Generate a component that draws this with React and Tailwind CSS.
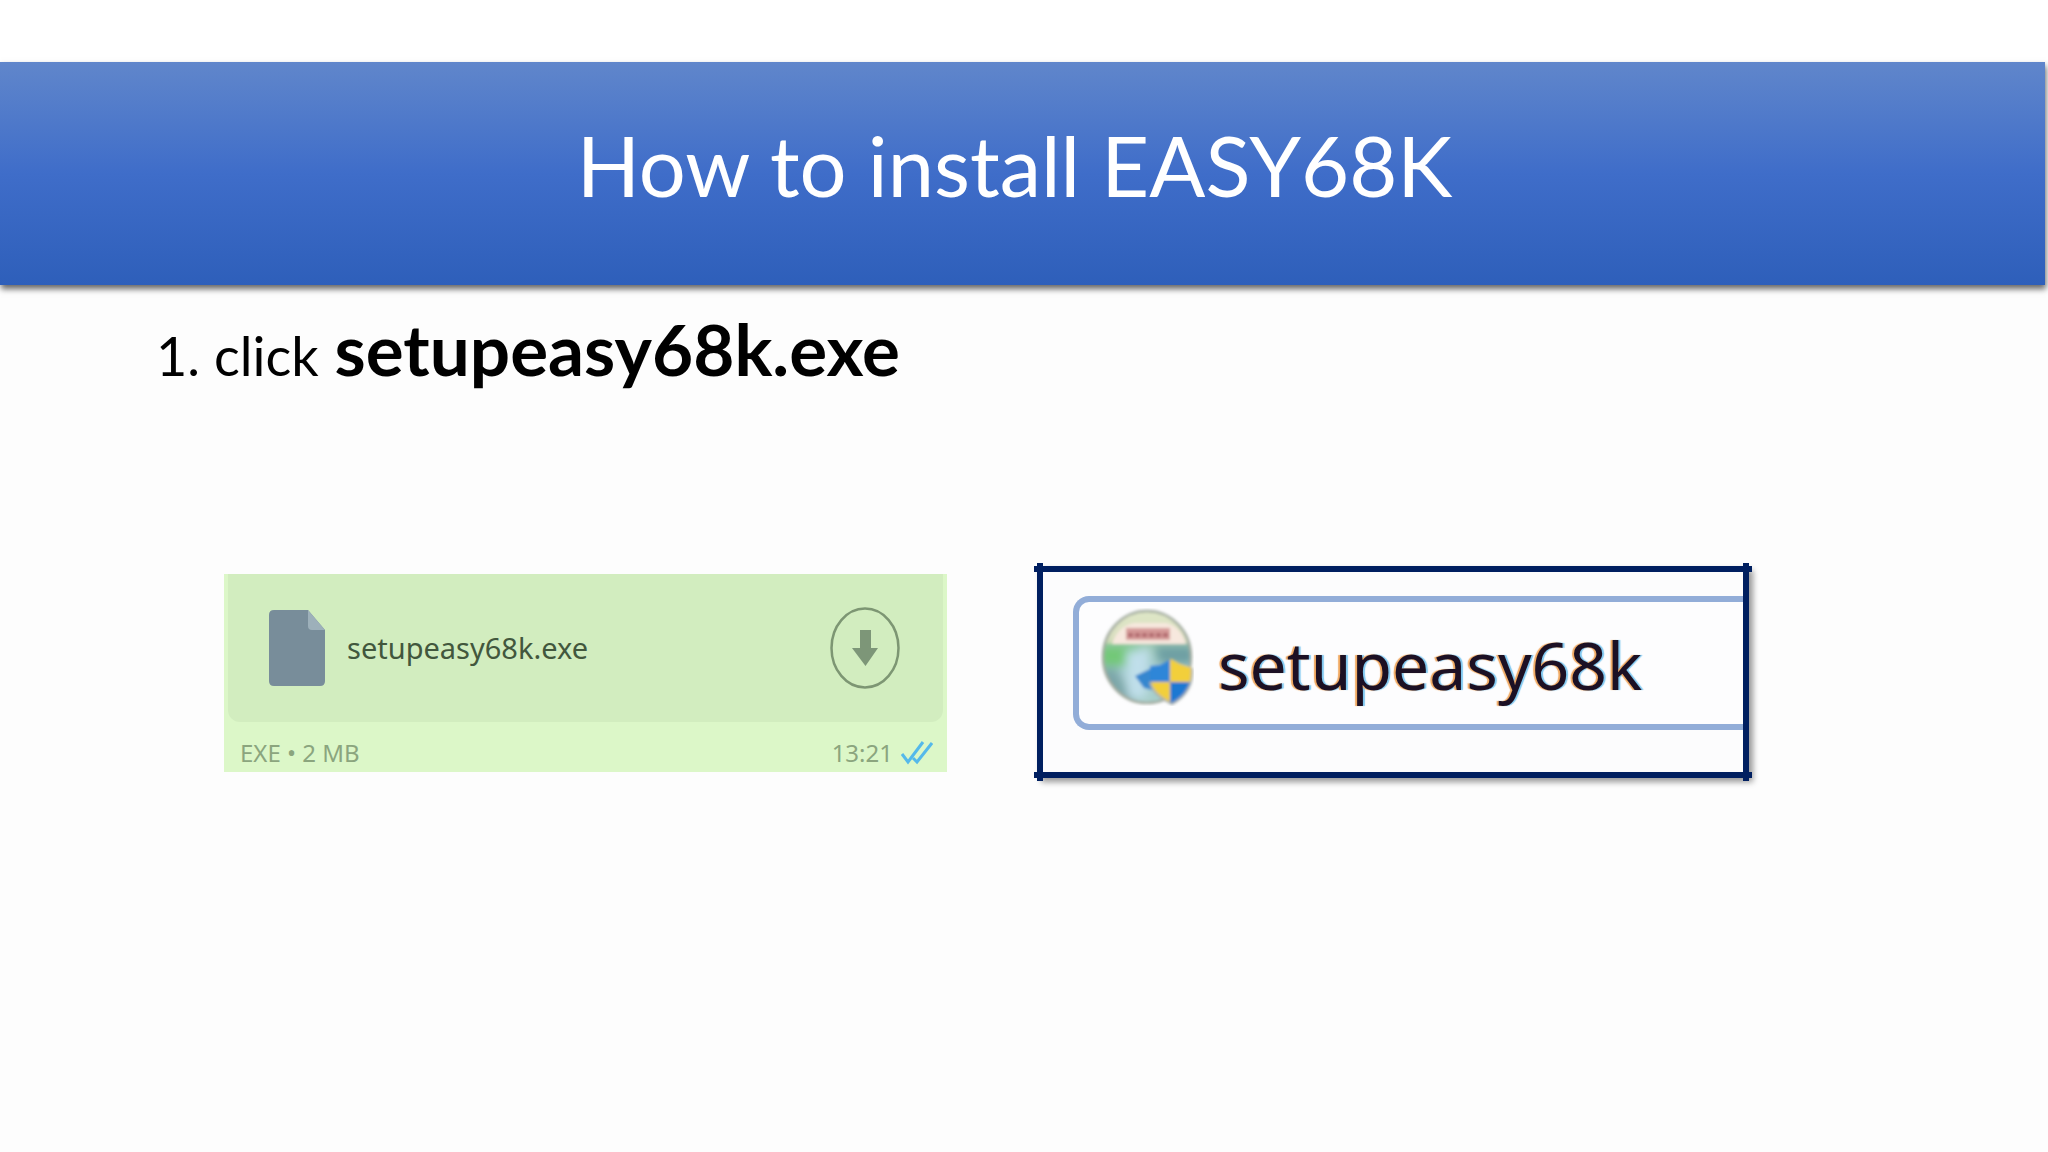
import React from "react";

function FileIcon() {
  return (
    <svg className="h-[76px] w-14 shrink-0" viewBox="0 0 56 76" aria-hidden="true">
      <path d="M5 0H39L56 20V71Q56 76 51 76H5Q0 76 0 71V5Q0 0 5 0Z" fill="#788d9a" />
      <path d="M39 0L56 20H43Q39 20 39 16Z" fill="#9db0ba" />
    </svg>
  );
}

function DownloadIcon() {
  return (
    <svg className="h-[82px] w-[70px]" viewBox="0 0 70 82" aria-hidden="true">
      <ellipse cx="35" cy="41" rx="33.5" ry="39.5" fill="none" stroke="#7d9673" strokeWidth="2.5" />
      <path d="M30 23H41V41H48L35.5 59L22 41H30Z" fill="#7d9678" />
    </svg>
  );
}

function DoubleCheck() {
  return (
    <svg className="h-6 w-8" viewBox="0 0 32 24" fill="none" stroke="#55b9ea" strokeWidth="3" aria-hidden="true">
      <path d="M1 13L7 21L22 1" />
      <path d="M12 17L16 21L31 2" />
    </svg>
  );
}

function InstallerIcon() {
  return (
    <svg className="h-[98px] w-[94px] shrink-0" viewBox="0 0 94 98" aria-hidden="true">
      <defs>
        <linearGradient id="globe" x1="0" y1="0" x2="0" y2="1">
          <stop offset="0" stopColor="#dfe8c8" />
          <stop offset="0.36" stopColor="#d9ddbf" />
          <stop offset="0.37" stopColor="#9cc9ae" />
          <stop offset="0.6" stopColor="#a3cbd0" />
          <stop offset="1" stopColor="#a8cfc8" />
        </linearGradient>
        <filter id="soft" x="-10%" y="-10%" width="120%" height="120%">
          <feGaussianBlur stdDeviation="1.6" />
        </filter>
        <filter id="haze" x="-20%" y="-20%" width="140%" height="140%">
          <feGaussianBlur stdDeviation="4" />
        </filter>
        <clipPath id="disc">
          <ellipse cx="47" cy="49" rx="44" ry="46" />
        </clipPath>
        <clipPath id="shield">
          <path d="M50 58L60 57L71 51L80 56L92 60Q94 84 72 96Q52 86 50 70Z" />
        </clipPath>
      </defs>
      <g filter="url(#soft)">
        <g clipPath="url(#disc)">
          <rect width="94" height="98" fill="url(#globe)" />
          <g filter="url(#haze)">
            <path d="M0 38H40L30 58H0Z" fill="#72c877" />
            <path d="M54 38H94V56H60Z" fill="#6d9fa3" />
            <path d="M0 60H16L36 98H0Z" fill="#7ba6a8" />
            <path d="M26 44L50 40L46 90H28Z" fill="#c0dfea" />
          </g>
          <path d="M12 36Q18 18 34 15H66Q80 18 86 36Z" fill="#f7e8de" />
          <rect x="26" y="20" width="44" height="12" fill="#d59a98" />
          <path d="M28 27H69" stroke="#b0696d" strokeWidth="4" strokeDasharray="5 2" />
        </g>
        <ellipse cx="47" cy="49" rx="44" ry="46" fill="none" stroke="#a3aca0" strokeWidth="2.5" />
        <path d="M35 68L52 60V82L44 80Z" fill="#3587cf" />
        <g clipPath="url(#shield)">
          <rect x="48" y="50" width="22" height="24" fill="#2f86d8" />
          <rect x="70" y="50" width="24" height="24" fill="#f2cf3a" />
          <rect x="48" y="74" width="22" height="24" fill="#f2cf3a" />
          <rect x="70" y="74" width="24" height="24" fill="#1f78d2" />
        </g>
        <path d="M92 60Q94 84 72 96Q52 86 50 74" fill="none" stroke="#a8b0ae" strokeWidth="2" />
      </g>
    </svg>
  );
}

function ChatFile() {
  return (
    <section className="flex h-[198px] flex-col bg-[#dcf7c8] px-1 font-['Noto_Sans',sans-serif]">
      <div className="flex h-[148px] items-center rounded-b-xl bg-[#d2edbf] pl-[41px] pr-[43px]">
        <FileIcon />
        <span className="ml-[22px] flex-1 text-[29px] leading-10 text-[#42573d]">setupeasy68k.exe</span>
        <button type="button" aria-label="Download setupeasy68k.exe">
          <DownloadIcon />
        </button>
      </div>
      <div className="flex flex-1 items-center pl-3 pr-2.5 pt-3 text-2xl leading-8 text-[#8ba57e]">
        <span className="flex-1">EXE • 2 MB</span>
        <time className="mr-2">13:21</time>
        <DoubleCheck />
      </div>
    </section>
  );
}

function Corner({ place }) {
  return (
    <span className={`absolute size-3 ${place}`} aria-hidden="true">
      <span className="absolute inset-x-0 top-[3px] h-1.5 bg-[#001f60]" />
      <span className="absolute inset-y-0 left-[3px] w-1.5 bg-[#001f60]" />
    </span>
  );
}

function ExplorerFile() {
  return (
    <section className="relative h-[212px] border-6 border-[#001f60] bg-[#fcfcfd] pl-[30px] pt-6 shadow-[4px_4px_6px_rgba(0,0,0,0.4)]">
      <div className="flex h-[134px] items-start rounded-l-2xl border-6 border-r-0 border-[#92add8] bg-[#fdfdfe] pl-[21px] pt-1.5">
        <InstallerIcon />
        <span className="ml-6 pt-4 font-['Noto_Sans',sans-serif] text-[66px] leading-20 text-[#1c1024] [text-shadow:-2px_0_1px_#f0a860,2px_0_1px_#80c8f0]">
          setupeasy68k
        </span>
      </div>
      <Corner place="-left-[9px] -top-[9px]" />
      <Corner place="-right-[9px] -top-[9px]" />
      <Corner place="-bottom-[9px] -left-[9px]" />
      <Corner place="-bottom-[9px] -right-[9px]" />
    </section>
  );
}

export default function App() {
  return (
    <main className="min-h-screen bg-[#fdfdfd] font-['Lato',sans-serif] text-black">
      <div className="h-[62px] bg-white" />
      <header className="mr-[3px] flex h-[223px] items-center justify-center bg-linear-to-b from-[#6086cb] via-[#3f6dc9] to-[#2e5fba] pb-4 pr-4 shadow-[1px_4px_6px_rgba(0,0,0,0.6)]">
        <h1 className="text-[83px] leading-none text-white">How to install EASY68K</h1>
      </header>
      <p className="flex items-baseline gap-4 pl-[156px] pt-6 leading-20">
        <span className="text-[54px]">1. click</span>
        <strong className="text-[71px] font-bold">setupeasy68k.exe</strong>
      </p>
      <div className="grid grid-cols-[723fr_712fr] items-start gap-[90px] pl-[224px] pr-[299px] pt-[170px]">
        <div className="pt-2">
          <ChatFile />
        </div>
        <ExplorerFile />
      </div>
    </main>
  );
}
